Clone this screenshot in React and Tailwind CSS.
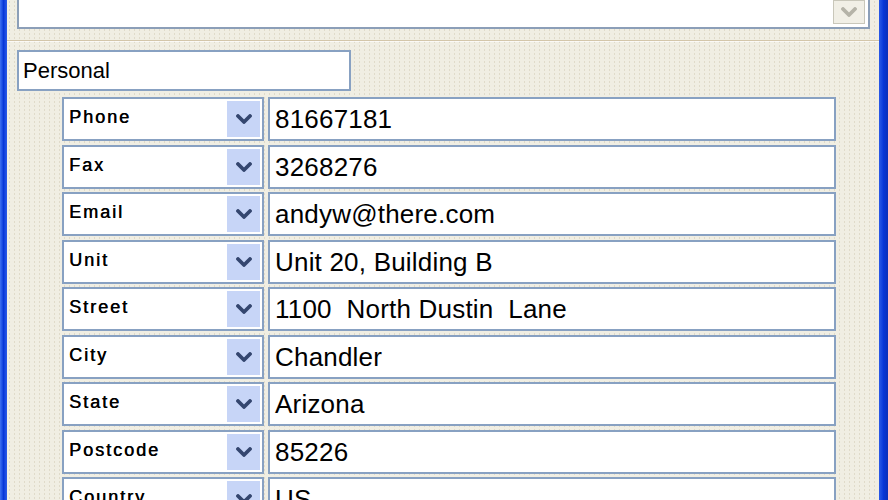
const rows = [
  ["Phone", "81667181"],
  ["Fax", "3268276"],
  ["Email", "andyw@there.com"],
  ["Unit", "Unit 20, Building B"],
  ["Street", "1100  North Dustin  Lane"],
  ["City", "Chandler"],
  ["State", "Arizona"],
  ["Postcode", "85226"],
  ["Country", "US"],
];

const Chevron = ({ color = "#34466f" }) => (
  <svg width="16" height="10" viewBox="0 0 16 10">
    <polyline points="2,2 8,8 14,2" fill="none" stroke={color} strokeWidth="3.8" strokeLinecap="round" strokeLinejoin="round" />
  </svg>
);

const Row = ({ label, value }) => (
  <div className="flex h-[44px] shrink-0 gap-[4px]">
    <div className="flex w-[202px] items-center border-2 border-[#88a1c2] bg-white pl-[5px] pr-[2px]">
      <span className="flex-1 -mt-[3px] text-[18px] tracking-[2px] text-black [text-shadow:0.4px_0_0_#000]">{label}</span>
      <div className="flex h-[36px] w-[33px] items-center justify-center bg-[#c7d5f7]">
        <Chevron />
      </div>
    </div>
    <div className="flex w-[568px] items-center border-2 border-[#88a1c2] bg-white pl-[5px]">
      <span className="whitespace-pre text-[26px] leading-none tracking-[0.2px] text-black">{value}</span>
    </div>
  </div>
);

export default function App() {
  return (
    <div
      className="flex h-[500px] w-[888px] overflow-hidden bg-[#ece9d8]"
      style={{ fontFamily: '"Liberation Sans", Arial, sans-serif' }}
    >
      <div className="w-[7px] shrink-0 bg-gradient-to-r from-[#3d6ff2] via-[#0736d8] to-[#2a5ae8]" />
      <div className="flex flex-1 flex-col bg-[#f0eee3] bg-[radial-gradient(#e0dbca_1px,transparent_1px)] bg-[length:5px_4px]">
        <div className="ml-[10px] mr-[9px] flex h-[29px] shrink-0 justify-end border-x-2 border-b-2 border-[#8c9fb8] bg-white pr-[3px]">
          <div className="flex h-[24px] w-[32px] items-center justify-center border border-[#c9c7ba] bg-[#f1efe6]">
            <Chevron color="#b5b3a8" />
          </div>
        </div>
        <div className="mt-[11px] h-[2px] shrink-0 border-t border-[#d3c6aa] bg-white/70" />
        <div className="ml-[10px] mt-[8px] flex h-[41px] w-[334px] shrink-0 items-center border-2 border-[#88a1c2] bg-white pl-[4px]">
          <span className="text-[22px] text-black">Personal</span>
        </div>
        <div className="ml-[55px] mt-[6px] flex flex-col gap-[3.5px]">
          {rows.map(([l, v]) => (
            <Row key={l} label={l} value={v} />
          ))}
        </div>
      </div>
      <div className="w-[9px] shrink-0 bg-gradient-to-r from-[#2a5ae8] via-[#0736d8] to-[#0a2fb8]" />
    </div>
  );
}
